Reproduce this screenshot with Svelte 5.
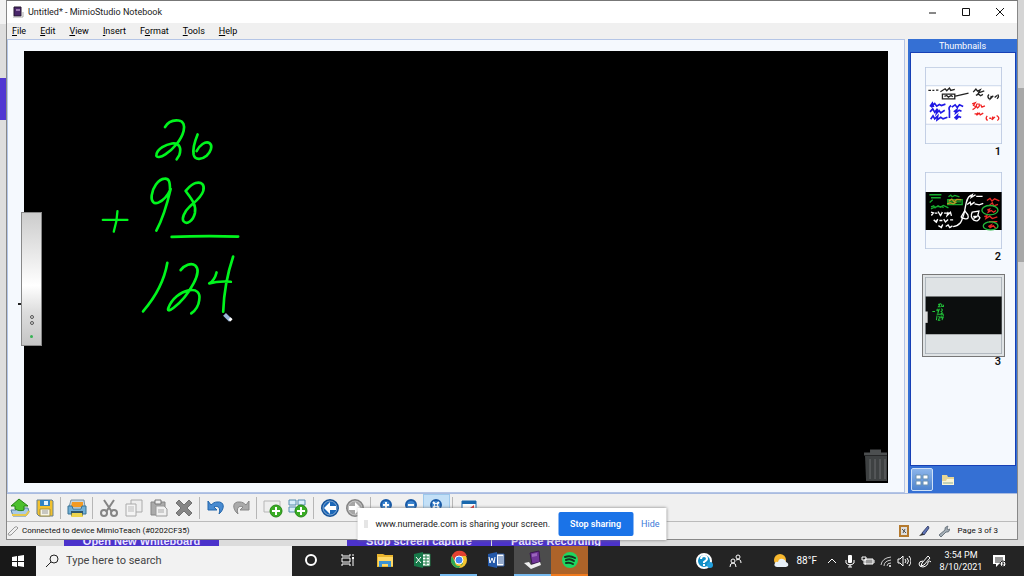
<script lang="ts">
    const menus: [string, string, string][] = [
        ["", "F", "ile"],
        ["", "E", "dit"],
        ["", "V", "iew"],
        ["", "I", "nsert"],
        ["F", "o", "rmat"],
        ["", "T", "ools"],
        ["", "H", "elp"],
    ];

    const toolGroups: string[][] = [
        ["Open", "Save"],
        ["Print"],
        ["Cut", "Copy", "Paste", "Delete"],
        ["Undo", "Redo"],
        ["New page", "Duplicate page"],
        ["Previous page", "Next page"],
        ["Zoom in", "Zoom out", "Fit to window"],
        ["Full screen"],
    ];

    const apps = ["Cortana", "Task view", "File Explorer", "Excel", "Chrome", "Word", "MimioStudio", "Spotify"];

    let page = $state(3);
    let sharing = $state(true);
    let search = $state("");
</script>

{#snippet toolIcon(name: string)}
    <svg viewBox="0 0 20 20" width="20" height="20" aria-hidden="true">
        {#if name === "Open"}
            <path d="M1 12h5l1-2h11l1 4-3 4H3z" fill="#a9cbe6" stroke="#557f9f" />
            <path d="M2 17h14l3-4" fill="none" stroke="#e8c94e" stroke-width="2" />
            <path d="M9 1 1 8h4v3c3 2 7 2 9 1V8h4z" fill="#4cc02c" stroke="#258312" />
        {:else if name === "Save"}
            <path d="M2 2h15l1 1v15H4l-2-2z" fill="#f2c12e" stroke="#657f91" />
            <path d="M5 2h10v6H5z" fill="#2e83c4" />
            <path d="M9 3h4v4H9z" fill="#dff2ff" />
            <path d="M5 11h10v7H5z" fill="#f5f5e7" stroke="#a39041" />
            <path d="M7 13h6M7 15h6" stroke="#999" />
        {:else if name === "Print"}
            <path d="M4 2h13l1 7H2z" fill="#c6d5e1" stroke="#7893a5" />
            <path d="M5 4h11v5H4z" fill="#f29a24" />
            <path d="M1 8h4l1 3h8l1-3h4v8H1z" fill="#71afd7" stroke="#397394" />
            <path d="M4 13h12v5H4z" fill="#315568" />
            <path d="M5 15h10l1 4H4z" fill="#eed44c" />
        {:else if name === "Cut"}
            <path d="m5 2 8 12M15 2 7 14" stroke="#858585" stroke-width="2" />
            <circle cx="5" cy="15" r="3" fill="none" stroke="#858585" stroke-width="2" />
            <circle cx="15" cy="15" r="3" fill="none" stroke="#858585" stroke-width="2" />
        {:else if name === "Copy"}
            <path d="M7 2h11v12H7z" fill="#eee" stroke="#aaa" />
            <path d="M2 6h10v12H2z" fill="#f4f4f4" stroke="#aaa" />
            <path d="M4 9h6M4 11h6M4 13h6" stroke="#bbb" />
        {:else if name === "Paste"}
            <path d="M2 4h14v13H2z" fill="#aaa" stroke="#858585" />
            <path d="M6 2h6v4H6z" fill="#eee" stroke="#777" />
            <path d="M7 8h8l3 3v7H7z" fill="#f0f0f0" stroke="#999" />
            <path d="M9 12h6M9 14h6" stroke="#aaa" />
        {:else if name === "Delete"}
            <path d="m2 5 3-3 5 5 5-5 3 3-5 5 5 5-3 3-5-5-5 5-3-3 5-5z" fill="#858585" stroke="#727272" />
        {:else if name === "Undo"}
            <path d="M2 3v9h9L8 9c4-2 7 1 5 7 6-5 6-13-2-12-2 0-4 1-6 3z" fill="#488bd1" stroke="#2366ab" />
        {:else if name === "Redo"}
            <path d="M18 3v9H9l3-3c-4-2-7 1-5 7-6-5-6-13 2-12 2 0 4 1 6 3z" fill="#aaa" stroke="#888" />
        {:else if name === "New page" || name === "Duplicate page"}
            {#if name === "New page"}
                <path d="M1 3h16v11H1z" fill="#eee" stroke="#b6b6b6" />
            {:else}
                <path d="M1 2h7v5H1zM10 2h7v5h-7zM1 9h7v5H1zM10 9h7v5h-7z" fill="#d9edfa" stroke="#568daf" />
            {/if}
            <circle cx="13" cy="13" r="6" fill="#39ac24" stroke="#278818" />
            <path d="M13 9v8M9 13h8" stroke="#fff" stroke-width="2" />
        {:else if name === "Previous page" || name === "Next page"}
            <circle cx="10" cy="10" r="8" fill={name === "Next page" ? "#a6a6a6" : "#1b67b8"} stroke={name === "Next page" ? "#858585" : "#14539a"} stroke-width="2" />
            <circle cx="10" cy="10" r="7" fill="none" stroke="#ffffff70" />
            {#if name === "Previous page"}
                <path d="m10 4-6 6 6 6v-4h6V8h-6z" fill="#fff" />
            {:else}
                <path d="m10 4 6 6-6 6v-4H4V8h6z" fill="#fff" />
            {/if}
        {:else if name === "Full screen"}
            <path d="M3 3h14v14H3z" fill="#fff" stroke="#1868ae" />
            <path d="M3 3h14v3H3z" fill="#1868ae" />
            <path d="m11 10 4-3v3" fill="#d33" />
        {:else}
            <path d="m12 12 6 6" stroke="#777" stroke-width="3" />
            <circle cx="9" cy="7" r="5" fill="#3c85cf" stroke="#185aa7" stroke-width="2" />
            {#if name === "Fit to window"}
                <path d="m6 4 6 6M12 4l-6 6" stroke="#fff" stroke-width="2" />
                <circle cx="9" cy="7" r="1" fill="#185aa7" />
            {:else}
                <path d={name === "Zoom in" ? "M9 4v6M6 7h6" : "M6 7h6"} stroke="#fff" stroke-width="2" />
            {/if}
        {/if}
    </svg>
{/snippet}

{#snippet appIcon(name: string)}
    <svg viewBox="0 0 20 20" width="20" height="20" aria-hidden="true">
        {#if name === "Cortana"}
            <circle cx="10" cy="10" r="5" fill="none" stroke="#fff" stroke-width="2" />
        {:else if name === "Task view"}
            <path d="M4 4v2h8V4M4 16v-2h8v2M4 8h8v4H4zM15 4v2M15 9v7" fill="none" stroke="#fff" />
            <path d="M14 7h2v2h-2z" fill="#fff" />
        {:else if name === "File Explorer"}
            <path d="M2 4h6l2 1h8v12H2z" fill="#eab52e" />
            <path d="M3 7h15v9H3z" fill="#ffd966" />
            <path d="M4 11h12v6h-3v-3H7v3H4z" fill="#3c93d2" />
        {:else if name === "Excel" || name === "Word"}
            <path d="M9 4h9v12H9z" fill="#fff" stroke={name === "Excel" ? "#21804a" : "#2b579a"} />
            {#if name === "Excel"}
                <path d="M11 7h6M11 10h6M11 13h6M14 5v10" stroke="#21804a" />
            {:else}
                <path d="M12 7h5M12 9h5M12 11h5M12 13h5" stroke="#2b579a" />
            {/if}
            <path d="m2 4 9-2v16l-9-2z" fill={name === "Excel" ? "#18794a" : "#2459a9"} />
            <path d={name === "Excel" ? "m4 7 5 6M9 7l-5 6" : "m3 7 1 6 2-5 2 5 1-6"} fill="none" stroke="#fff" />
        {:else if name === "Chrome"}
            <circle cx="10" cy="10" r="8" fill="#f4c430" />
            <path d="M3 6a8 8 0 0 1 15 0h-8a4 4 0 0 0-4 5z" fill="#e34133" />
            <path d="M3 6a8 8 0 0 0 7 12l4-6a4 4 0 0 1-8 0z" fill="#31a853" />
            <circle cx="10" cy="10" r="4" fill="#4285f4" stroke="#fff" />
        {:else if name === "MimioStudio"}
            <path d="m7 3 9-2 1 11-8 2z" fill="#713699" stroke="#38174d" />
            <path d="m9 4 5-1v3l-5 1z" fill="#9a66bb" />
            <path d="m1 13 5-1 2 3 9-3 1 3-10 4z" fill="#eee" />
        {:else}
            <circle cx="10" cy="10" r="8" fill="#1ed760" />
            <path d="M5 7q5-2 10 1M6 10q4-2 8 1M6 13q4-1 7 1" fill="none" stroke="#15351f" stroke-width="2" stroke-linecap="round" />
        {/if}
    </svg>
{/snippet}

<div class="screen">
    <div class="desktop">
        <div class="left-edge"><span></span></div>
        <main class="window">
            <header class="title-bar">
                <svg viewBox="0 0 12 12" width="12" height="12" aria-hidden="true">
                    <path d="M2 1h7v9H2z" fill="#49266a" stroke="#24172e" />
                    <path d="M4 3h4v2H4z" fill="#9b7ab0" />
                    <path d="M1 11h10V6" fill="none" stroke="#aaa" />
                </svg>
                <h1>Untitled* - MimioStudio Notebook</h1>
                <div class="window-controls">
                    <button aria-label="Minimize"><svg viewBox="0 0 10 10" width="10" height="10"><path d="M2 6h7" stroke="#111" /></svg></button>
                    <button aria-label="Maximize"><svg viewBox="0 0 10 10" width="10" height="10"><path d="M1.500 1.500h7v7h-7z" fill="none" stroke="#111" /></svg></button>
                    <button aria-label="Close"><svg viewBox="0 0 10 10" width="10" height="10"><path d="m1 1 8 8M9 1 1 9" stroke="#111" /></svg></button>
                </div>
            </header>

            <nav class="menu-bar">
                {#each menus as m}
                    <button>{m[0]}<u>{m[1]}</u>{m[2]}</button>
                {/each}
            </nav>

            <div class="workspace">
                <section class="canvas">
                    <svg class="board" viewBox="24 51 865 433" preserveAspectRatio="xMinYMin meet" role="img" aria-label="26 + 98 = 124">
                        <g transform="translate(90 110) scale(.3333)" fill="none" stroke="#00f51d" stroke-width="8" stroke-linecap="round" stroke-linejoin="round">
                            <path d="M226 52c8-15 24-22 41-20 15 2 19 16 15 31-7 28-32 56-55 71-13 9-29 11-27 1 3-18 29-31 47-34 23-3 29 14 22 35l-8 13" />
                            <path d="M324 74c-9 22-15 43-12 60 4 18 25 16 39 4 12-11 20-30 9-38-12-8-31 7-39 24" />
                            <path d="M241 239c0-23-3-33-16-32-20 1-37 29-39 50-2 17 6 28 20 22 18-8 30-25 37-41-10 43-24 90-43 125" />
                            <path d="M288 244c9-10 16-20 30-24 19-5 28 6 23 24-6 20-24 32-41 47-17 16-24 36-18 44 10 12 29-2 34-25 5-26-13-46-28-66" />
                            <path d="M39 331h74M83 305q-1 30-11 61" stroke-width="7" />
                            <path d="M246 382q98-4 200-1" />
                            <path d="M233 460q-13 77-73 146" />
                            <path d="M273 482c11-15 32-23 44-14 12 10 6 33-5 54-16 30-38 57-60 73-15 11-20 10-15-1 10-26 35-46 60-51 24-5 36 7 32 29-2 17-10 30-24 40" />
                            <path d="M381 489q-6 24-22 33 27-8 65-5M431 441q-27 80-30 166" />
                        </g>
                        <path d="m225 315 6 6" stroke="#9ab5d6" stroke-width="4" />
                        <path d="m230 319 2 2" stroke="#fff" stroke-width="3" />
                        <path d="M867 457h22v25h-21z" fill="#3e4142" />
                        <path d="M866 455h23M872 452h11" stroke="#4c4f50" stroke-width="3" />
                        <path d="M872 460v20M877 460v20M882 460v20M887 460v20" stroke="#686b6c" />
                    </svg>
                    <div class="device">
                        <i class="ring"></i>
                        <i class="ring"></i>
                        <i class="led"></i>
                    </div>
                </section>

                <aside>
                    <h2>Thumbnails</h2>
                    <div class="thumbs">
                        <button class:selected={page === 1} onclick={() => (page = 1)}>
                            <svg viewBox="76 201 230 230" aria-hidden="true">
                                <path d="M77 202h228v228H77z" fill="#f5f9fe" stroke="#b9c8e0" stroke-width="3" />
                                <path d="M78 257h226v115H78z" fill="#fff" stroke="#b5c5df" stroke-width="2" />
                                <g fill="none" stroke-width="4">
                                    <path d="M86 271h8M98 271h6M109 270h7M122 275l14-9 5 6 8-8 4 7 12-3M128 282h37v14h-37zM134 289l7-3 5 5 8-5 5 4M167 288l39-9M220 276l8-9 5 6 8-4-5 9 17-6M228 286l8-4 6 5 7-4M267 283q-7 8 2 14M274 287l-2 8 8-8M284 292l7-6M293 283q6 7-2 13" stroke="#222" />
                                    <path d="m91 319 7-10 3 9-7 2 11-10 6 8 8-5 6 3 12-4M91 335l8-9 6 10 8-10-3 14 8-9 5 7 12-8M93 357l7-10 5 9 9-9-2 12 11-8 7 5 13-5M154 316q-9 5-5 15v22M156 321l10-7 6 8 7-8 11 5M162 335l9-7-3 10 10-8 7 3M164 354l8-8-3 12 8-9 7 3" stroke="#2018e5" stroke-width="5" />
                                    <path d="m217 311 9-3-5 8q13 5-3 12M233 310q-8 7 0 13 9-5 3-13M242 313l4 8 9-4M224 341h9M234 337l-4 8 8-6 3 5 9-5M262 347q-7 8 1 14M268 354h6M279 349l-3 10 9-9M290 346q12 8 2 15" stroke="#f12020" />
                                </g>
                            </svg>
                            <span>1</span>
                        </button>
                        <button class:selected={page === 2} onclick={() => (page = 2)}>
                            <svg viewBox="76 35 230 230" aria-hidden="true">
                                <path d="M77 36h228v228H77z" fill="#f5f9fe" stroke="#b9c8e0" stroke-width="3" />
                                <path d="M78 95h227v113H78z" fill="#000" />
                                <g fill="none" stroke="#fff" stroke-width="4">
                                    <path d="m94 155 7 2-6 8M105 158h8M115 153l7 12 6-10-6 11M133 158h9M145 154l-3 11 10-10 3 11M102 178l7 6 5-8-5 11M119 180h9M132 176l5 8 8-7M151 178h9M116 195l8 5 5-8-5 11M138 198l7-5 5 8 8-5M160 198c23-4 25-15 32-37 7-25 5-49 21-57M208 109l9-6-3 8 13-8M229 108h19M202 132l9-7 2 8 11-8M224 130l14 3 12-4" />
                                    <path d="M187 164l8-13 9 12q5 15-10 11-15 0-7-10zM217 155l20-3-3 12 6 8q-5 13-18 7-12-10-5-24zM220 168h13M221 174l12-7" />
                                    <path d="M89 103h36M94 112h29M99 118l-9 8M146 109l7-5 4 5 8-4 14 4M144 124h40M144 118h43v14h-43zM94 139l8-3 4 6 9-6 7 4 9-5 15 7M94 145q20-12 38-4" stroke="#16ac2e" />
                                    <path d="M147 122l9-6 7 8 8-7 13 1M142 130l9-3 10 3 9-5" stroke="#b49b25" />
                                    <path d="M261 120l9-6 6 8 8-7 14 6M269 134l8-7 4 9 13-4M262 149l7-3-4 9 9-5 7 5 7-5M253 168l8-3-3 9 11-7 8 7 15-5M267 183h25M265 198l9-5-5 9 11-7 7 8" stroke="#e52a25" />
                                    <ellipse cx="270" cy="149" rx="24" ry="14" stroke="#22b83b" />
                                    <ellipse cx="272" cy="196" rx="22" ry="12" stroke="#22b83b" />
                                </g>
                            </svg>
                            <span>2</span>
                        </button>
                        <button class:selected={page === 3} onclick={() => (page = 3)}>
                            <svg viewBox="76 350 230 230" aria-hidden="true">
                                <path d="M77 351h228v228H77z" fill="#dfe3e5" stroke="#a5adb5" stroke-width="3" />
                                <path d="M78 408h227v113H78z" fill="#0c0e0e" />
                                <path d="M76 453h8v34h-8z" fill="#ddd" />
                                <path d="m115 432 7-2-6 9h7M126 431v7h5v-5M114 445q-6 6 1 6l4-6-5 14M124 445q8 3 0 8 8 7-1 6M98 453h8M111 461h21M112 465l-2 14M116 467q6 0 0 12h6M125 465l-2 7h9M131 463l-4 16" fill="none" stroke="#22c83a" stroke-width="3" />
                            </svg>
                            <span>3</span>
                        </button>
                    </div>
                    <div class="tabs">
                        <button class="current" aria-label="Thumbnails">
                            <svg viewBox="0 0 14 14" width="14" height="14"><path d="M1 2h5v4H1zM8 2h5v4H8zM1 8h5v4H1zM8 8h5v4H8z" fill="#fff" stroke="#6b91b0" /></svg>
                        </button>
                        <button aria-label="Gallery">
                            <svg viewBox="0 0 14 14" width="14" height="14"><path d="M1 2h5l1 2h6v8H1z" fill="#e7d696" /><path d="M1 8h4l1-2h7v6H1z" fill="#faf5d5" /><path d="M2 10h10" stroke="#8cad99" /></svg>
                        </button>
                    </div>
                </aside>
            </div>

            <div class="toolbar">
                {#each toolGroups as group}
                    <div class="group">
                        {#each group as name}
                            <button class:active={name === "Fit to window"} aria-label={name}>{@render toolIcon(name)}</button>
                        {/each}
                    </div>
                {/each}
            </div>

            <footer class="status">
                <svg viewBox="0 0 12 12" width="12" height="12" aria-hidden="true"><path d="m2 8 6-6q2-1 3 1l-7 7q-3 1-3-1l6-6" fill="none" stroke="#999" /></svg>
                <span>Connected to device MimioTeach (#0202CF35)</span>
                <div class="status-right">
                    <svg viewBox="0 0 12 12" width="12" height="12" aria-hidden="true"><path d="M2 1h8v10H2z" fill="#ddd" stroke="#b57a2e" stroke-width="2" /><path d="m4 4 4 4M7 4 5 8" stroke="#555" /></svg>
                    <svg viewBox="0 0 12 12" width="12" height="12" aria-hidden="true"><path d="m4 8 6-7 1 2-5 7z" fill="#5d73b7" stroke="#3c466f" /><path d="m1 11 3-3 2 2z" fill="#333" /></svg>
                    <svg viewBox="0 0 12 12" width="12" height="12" aria-hidden="true"><path d="m1 10 6-5q-1-3 3-4L9 3l1 2 2-1q-1 4-4 3l-5 5z" fill="#a3adb5" stroke="#6d7780" /></svg>
                    <span>Page 3 of 3</span>
                </div>
            </footer>
        </main>
        <div class="right-edge"></div>
    </div>

    <div class="page-behind">
        <button>Open New Whiteboard</button>
        <button class="wide">Stop screen capture</button>
        <button class="last">Pause Recording</button>
    </div>

    {#if sharing}
        <div class="share">
            <i class="grip"></i>
            <span>www.numerade.com is sharing your screen.</span>
            <button class="stop" onclick={() => (sharing = false)}>Stop sharing</button>
            <button class="hide" onclick={() => (sharing = false)}>Hide</button>
        </div>
    {/if}

    <div class="taskbar">
        <button class="start" aria-label="Start">
            <svg viewBox="0 0 12 12" width="12" height="12"><path d="m0 2 5-1v5H0zM6 1l6-1v6H6zM0 7h5v5l-5-1zM6 7h6v5l-6-1z" fill="#fff" /></svg>
        </button>
        <label class="search">
            <svg viewBox="0 0 14 14" width="14" height="14" aria-hidden="true"><circle cx="9" cy="5" r="4" fill="none" stroke="#222" /><path d="m6 8-5 5" stroke="#222" /></svg>
            <input type="text" placeholder="Type here to search" aria-label="Type here to search" bind:value={search} />
        </label>
        <div class="apps">
            {#each apps as name}
                <button
                    class:running={name === "Chrome"}
                    class:open={name === "MimioStudio"}
                    class:alert={name === "Spotify"}
                    aria-label={name}
                >{@render appIcon(name)}</button>
            {/each}
        </div>
        <div class="tray">
            <svg viewBox="0 0 18 18" width="18" height="18" aria-hidden="true">
                <circle cx="9" cy="9" r="7" fill="#128fc6" stroke="#fff" stroke-width="2" />
                <path d="M6 7q0-3 3-3t3 3q0 1-3 3v1M9 12v2" fill="none" stroke="#fff" stroke-width="2" />
                <circle cx="15" cy="13" r="3" fill="#21a0dd" />
            </svg>
            <svg class="people" viewBox="0 0 14 14" width="14" height="14" aria-hidden="true"><g fill="none" stroke="#fff"><circle cx="9" cy="3" r="2" /><circle cx="4" cy="7" r="2" /><path d="M1 13q0-4 3-4t3 4M7 6q5-2 5 3" /></g></svg>
            <svg viewBox="0 0 16 16" width="16" height="16" aria-hidden="true"><circle cx="7" cy="7" r="6" fill="#f8b82d" /><path d="M4 14q-4-1-2-4 1-2 3-1 1-4 5-3 3 1 3 3 3 1 2 4l-2 1z" fill="#e7eff7" /></svg>
            <span class="degrees">88°F</span>
            <svg viewBox="0 0 14 14" width="14" height="14" aria-hidden="true"><path d="m3 9 4-4 4 4" fill="none" stroke="#fff" /></svg>
            <svg viewBox="0 0 14 14" width="14" height="14" aria-hidden="true"><rect x="5" y="1" width="4" height="8" rx="1" fill="#fff" /><path d="M3 6v3q4 4 8 0V6M7 10v3M5 13h4" fill="none" stroke="#fff" /></svg>
            <svg viewBox="0 0 14 14" width="14" height="14" aria-hidden="true"><path d="M4 5h8v5H4z" fill="#999" stroke="#fff" /><path d="M1 3h4v3H1zM3 6v4h2M13 6v3" fill="none" stroke="#fff" /></svg>
            <svg viewBox="0 0 14 14" width="14" height="14" aria-hidden="true"><path d="M2 11Q3 4 12 3M5 12q0-5 7-6M8 12q0-3 4-3" fill="none" stroke="#ccc" /><circle cx="11" cy="12" r="1" fill="#fff" /></svg>
            <svg viewBox="0 0 14 14" width="14" height="14" aria-hidden="true"><path d="M1 5h2l3-3v10L3 9H1zM8 5q2 2 0 4M10 4q3 3 0 6M12 2q4 5 0 10" fill="none" stroke="#fff" /></svg>
            <svg class="pen" viewBox="0 0 14 14" width="14" height="14" aria-hidden="true"><path d="m4 9 6-7 2 2-6 7-3 1zM5 7q-4 0-4 3t4 3q5-1 5-5 2-2 3 0" fill="none" stroke="#fff" /></svg>
            <div class="clock"><span>3:54 PM</span><span>8/10/2021</span></div>
            <svg viewBox="0 0 14 14" width="14" height="14" aria-hidden="true"><path d="M1 1h12v9H7l-3 3v-3H1z" fill="#fff" /><path d="M3 4h8M3 6h8M3 8h5" stroke="#333" /><circle cx="11" cy="10" r="3" fill="#fff" stroke="#222" /><path d="M10 9h2l-2 3h2" fill="none" stroke="#222" /></svg>
        </div>
    </div>
</div>

<style>
    :global(body) {
        margin: 0;
    }

    .screen {
        position: relative;
        display: flex;
        flex-direction: column;
        height: 100vh;
        overflow: hidden;
        background: #dcdcdc;
        color: #222;
        font-family: Roboto, "Noto Sans", sans-serif;
        font-size: 9px;
        line-height: 12px;
    }

    button {
        padding: 0;
        border: 0;
        background: none;
        color: inherit;
        font: inherit;
    }

    svg {
        display: block;
        flex: none;
    }

    .desktop {
        display: flex;
        flex: 1;
        min-height: 0;
    }

    .left-edge {
        width: 6px;
        padding-top: 78px;
        box-sizing: border-box;
        background: linear-gradient(#f2f2f2 24px, #dedede 24px);
    }

    .left-edge span {
        display: block;
        height: 42px;
        background: #5037d2;
    }

    .right-edge {
        width: 6px;
        background: linear-gradient(#d5d5d5 88px, #a8a8a8 88px, #a8a8a8 262px, #d5d5d5 262px);
    }

    .window {
        display: flex;
        flex: 1;
        flex-direction: column;
        min-width: 0;
        box-sizing: border-box;
        border: 1px solid #888;
        border-top-color: #777;
        background: #f0f0f0;
    }

    .title-bar {
        display: flex;
        align-items: center;
        height: 22px;
        padding-left: 5px;
        gap: 4px;
        background: #fff;
    }

    h1,
    h2 {
        margin: 0;
        font-size: 9px;
        font-weight: 400;
    }

    .window-controls {
        display: flex;
        margin-left: auto;
    }

    .window-controls button {
        display: flex;
        justify-content: center;
        width: 34px;
    }

    .menu-bar {
        display: flex;
        gap: 14px;
        height: 16px;
        padding-left: 5px;
        color: #000;
    }

    .workspace {
        display: flex;
        flex: 1;
        min-height: 0;
        border-bottom: 1px solid #a9bbe0;
    }

    .canvas {
        position: relative;
        flex: 1;
        min-width: 0;
        padding: 11px 16px 9px;
        border: 1px solid #b4c5e6;
        background: #f5f9fe;
    }

    .board {
        width: 100%;
        height: 100%;
        background: #000;
    }

    .device {
        position: absolute;
        top: 38%;
        left: 13px;
        display: flex;
        flex-direction: column;
        align-items: center;
        justify-content: flex-end;
        gap: 2px;
        width: 19px;
        height: 132px;
        border: 1px solid #888;
        background: linear-gradient(#ccc, #fff 55%, #ddd 75%, #c5c5c5);
    }

    .device::before {
        content: "";
        position: absolute;
        top: 90px;
        left: -4px;
        width: 3px;
        height: 2px;
        background: #222;
    }

    .ring {
        width: 2px;
        height: 2px;
        border: 1px solid #555;
        border-radius: 50%;
    }

    .led {
        width: 3px;
        height: 3px;
        margin: 8px 0 7px;
        border-radius: 50%;
        background: #35b253;
    }

    aside {
        display: flex;
        flex-direction: column;
        width: 109px;
        margin-left: 3px;
        box-sizing: border-box;
        background: #3570d4;
    }

    h2 {
        height: 13px;
        color: #fff;
        line-height: 14px;
        text-align: center;
    }

    .thumbs {
        display: flex;
        flex: 1;
        flex-direction: column;
        gap: 12px;
        min-height: 0;
        margin: 0 1px 0 2px;
        padding-top: 11px;
        border: 1px solid #1740b5;
        background: #f5f9fe;
    }

    .thumbs button {
        display: flex;
        flex-direction: column;
        align-items: center;
        line-height: 10px;
    }

    .thumbs button svg {
        width: 77px;
        height: 77px;
        padding: 2px;
        border: 1px solid transparent;
    }

    .thumbs button.selected svg {
        border-color: #777;
        background: #dfe3e5;
    }

    .thumbs button span {
        width: 76px;
        color: #111;
        font-size: 11px;
        font-weight: 600;
        text-align: right;
    }

    .tabs {
        display: flex;
        gap: 4px;
        height: 27px;
        padding: 2px 3px;
        box-sizing: border-box;
    }

    .tabs button {
        display: flex;
        align-items: center;
        justify-content: center;
        width: 22px;
        box-sizing: border-box;
    }

    .tabs .current {
        border: 1px solid #cfe1f7;
        border-radius: 2px;
        background: linear-gradient(#8cb5ea, #4d83cf);
    }

    .toolbar {
        display: flex;
        height: 27px;
    }

    .group {
        display: flex;
        align-items: center;
    }

    .group:not(:last-child)::after {
        content: "";
        width: 1px;
        height: 22px;
        margin: 0 3px;
        background: #b6b6b6;
    }

    .group button {
        display: flex;
        align-items: center;
        justify-content: center;
        width: 25px;
        height: 25px;
    }

    .group .active {
        background: #c3e0f7;
        outline: 1px solid #9cc8ec;
    }

    .status {
        display: flex;
        align-items: center;
        gap: 3px;
        height: 17px;
        border-top: 1px solid #bbb;
        color: #111;
        font-size: 8px;
    }

    .status-right {
        display: flex;
        align-items: center;
        gap: 8px;
        margin-left: auto;
        padding-right: 19px;
    }

    .page-behind {
        display: flex;
        align-items: flex-end;
        height: 6px;
        padding-left: 64px;
        overflow: hidden;
    }

    .page-behind button {
        width: 155px;
        height: 12px;
        background: #4b32cb;
        color: #e8e4ff;
        font-family: "Liberation Sans", sans-serif;
        font-size: 11px;
        line-height: 14px;
        font-weight: 600;
    }

    .page-behind .wide {
        width: 144px;
        margin-left: 128px;
    }

    .page-behind .last {
        width: 128px;
        margin-left: 1px;
    }

    .share {
        position: absolute;
        bottom: 36px;
        left: 50%;
        display: flex;
        align-items: center;
        height: 32px;
        padding: 0 7px;
        transform: translateX(-50%);
        background: #fff;
        box-shadow: 0 0 3px #777;
        white-space: nowrap;
    }

    .grip {
        width: 1px;
        height: 8px;
        margin-right: 8px;
        border: solid #ccc;
        border-width: 0 1px;
    }

    .stop {
        height: 24px;
        margin: 0 8px;
        padding: 0 12px;
        border-radius: 2px;
        background: #1a73e8;
        color: #fff;
        font-weight: 600;
    }

    .hide {
        color: #3b78d8;
    }

    .taskbar {
        display: flex;
        height: 30px;
        background: #242424;
        color: #fff;
    }

    .start {
        display: flex;
        align-items: center;
        justify-content: center;
        width: 36px;
        background: #181818;
    }

    .search {
        display: flex;
        align-items: center;
        gap: 7px;
        width: 25%;
        padding-left: 9px;
        box-sizing: border-box;
        background: #f2f2f2;
    }

    .search input {
        flex: 1;
        min-width: 0;
        padding: 0;
        border: 0;
        outline: 0;
        background: none;
        color: #333;
        font: inherit;
        font-size: 11px;
    }

    .search input::placeholder {
        color: #444;
    }

    .apps {
        display: flex;
    }

    .apps button {
        display: flex;
        align-items: center;
        justify-content: center;
        width: 37px;
        border-bottom: 2px solid transparent;
        box-sizing: border-box;
    }

    .apps .running {
        border-color: #76b9ed;
    }

    .apps .open {
        border-color: #76b9ed;
        background: #4c4c4c;
    }

    .apps .alert {
        border-color: #f07a1d;
        background: #ad6329;
    }

    .tray {
        display: flex;
        align-items: center;
        gap: 4px;
        margin-left: auto;
        padding-right: 18px;
    }

    .people {
        margin: 0 26px 0 12px;
    }

    .degrees {
        margin: 0 4px 0 3px;
        font-size: 10px;
    }

    .pen {
        margin-left: 3px;
    }

    .clock {
        display: flex;
        flex-direction: column;
        width: 46px;
        margin: 0 4px 0 2px;
        text-align: center;
    }
</style>
